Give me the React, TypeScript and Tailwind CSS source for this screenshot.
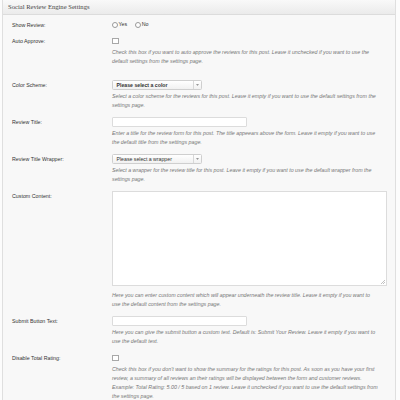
import React from 'react';

const sans = { fontFamily: '"Liberation Sans", Arial, sans-serif' };

interface RowProps {
  label: string;
  className?: string;
  children: React.ReactNode;
}

const Row: React.FC<RowProps> = ({ label, className = '', children }) => (
  <div className={`flex ${className}`}>
    <div className="w-[100px] shrink-0 text-[5.3px] leading-[10px] text-[#333]">{label}</div>
    <div className="flex-1 flex flex-col">{children}</div>
  </div>
);

const Desc: React.FC<{ lines: string[] }> = ({ lines }) => (
  <div className="mt-[1.5px] text-[5.3px] leading-[9px] italic text-[#777] whitespace-nowrap">
    {lines.map((line, i) => (
      <div key={i}>{line}</div>
    ))}
  </div>
);

const Checkbox = () => (
  <div className="h-[10px] flex items-center">
    <div className="w-[6.5px] h-[6.5px] border border-[#a8a8a8] bg-white" />
  </div>
);

const Select: React.FC<{ text: string; bold?: boolean }> = ({ text, bold }) => (
  <div className="w-[90px] h-[10px] flex border border-[#cfcfcf] rounded-[1.5px] bg-gradient-to-b from-white to-[#f1f1f1]">
    <div className={`flex-1 pl-[3.5px] text-[5.2px] leading-[8px] text-[#333] ${bold ? 'font-semibold' : ''}`}>{text}</div>
    <div className="w-[8px] border-l border-[#d8d8d8] flex items-center justify-center">
      <svg width="3" height="2" viewBox="0 0 3 2">
        <path d="M0 0h3L1.5 2z" fill="#999" />
      </svg>
    </div>
  </div>
);

const TextInput = () => <div className="w-[135px] h-[10px] border border-[#dcdcdc] bg-white rounded-[1px]" />;

const Radio: React.FC<{ label: string }> = ({ label }) => (
  <div className="flex items-center gap-[1px]">
    <div className="w-[5.5px] h-[5.5px] rounded-full border border-[#9a9a9a] bg-white" />
    <span className="text-[5.3px] text-[#333]">{label}</span>
  </div>
);

export default function App() {
  return (
    <div className="w-[400px] h-[400px] overflow-hidden bg-[#fcfcfc] pl-[2px] pr-[4px]" style={sans}>
      <div className="border-x border-[#dfdfdf] bg-[#f8f8f8] h-[420px]">
        <div className="h-[15px] border-b border-[#dcdcdc] bg-gradient-to-b from-[#f9f9f9] to-[#ebebeb] pl-[5px] flex items-center">
          <span className="text-[6.6px] text-[#464646]" style={{ fontFamily: '"Liberation Serif", Georgia, serif' }}>
            Social Review Engine Settings
          </span>
        </div>

        <div className="pl-[9px] pr-[10px] pt-[5px] flex flex-col gap-[7.5px]">
          <Row label="Show Review:" className="mb-[-1.5px]">
            <div className="h-[10px] flex items-center gap-[8px]">
              <Radio label="Yes" />
              <Radio label="No" />
            </div>
          </Row>

          <Row label="Auto Approve:">
            <Checkbox />
            <Desc
              lines={[
                'Check this box if you want to auto approve the reviews for this post. Leave it unchecked if you want to use the',
                'default settings from the settings page.',
              ]}
            />
          </Row>

          <Row label="Color Scheme:" className="mt-[7px]">
            <Select text="Please select a color" bold />
            <Desc
              lines={[
                'Select a color scheme for the reviews for this post. Leave it empty if you want to use the default settings from the',
                'settings page.',
              ]}
            />
          </Row>

          <Row label="Review Title:">
            <TextInput />
            <Desc
              lines={[
                'Enter a title for the review form for this post. The title appeears above the form. Leave it empty if you want to use',
                'the default title from the settings page.',
              ]}
            />
          </Row>

          <Row label="Review Title Wrapper:">
            <Select text="Please select a wrapper" />
            <Desc
              lines={[
                'Select a wrapper for the review title for this post. Leave it empty if you want to use the default wrapper from the',
                'settings page.',
              ]}
            />
          </Row>

          <Row label="Custom Content:">
            <div className="relative w-[275px] h-[95px] border border-[#dcdcdc] bg-white">
              <svg className="absolute right-[1px] bottom-[1px]" width="4" height="4" viewBox="0 0 4 4">
                <path d="M4 0L0 4M4 2L2 4" stroke="#999" strokeWidth="0.6" />
              </svg>
            </div>
            <div className="mt-[3px]">
              <Desc
                lines={[
                  'Here you can enter custom content which will appear underneath the review title. Leave it empty if you want to',
                  'use the default content from the settings page.',
                ]}
              />
            </div>
          </Row>

          <Row label="Submit Button Text:">
            <TextInput />
            <Desc
              lines={[
                'Here you can give the submit button a custom text. Default is: Submit Your Review. Leave it empty if you want to',
                'use the default text.',
              ]}
            />
          </Row>

          <Row label="Disable Total Rating:">
            <Checkbox />
            <Desc
              lines={[
                "Check this box if you don't want to show the summary for the ratings for this post. As soon as you have your first",
                'review, a summary of all reviews an their ratings will be displayed between the form and customer reviews.',
                'Example: Total Rating: 5.00 / 5 based on 1 review. Leave it unchecked if you want to use the default settings from',
                'the settings page.',
              ]}
            />
          </Row>
        </div>
      </div>
    </div>
  );
}
